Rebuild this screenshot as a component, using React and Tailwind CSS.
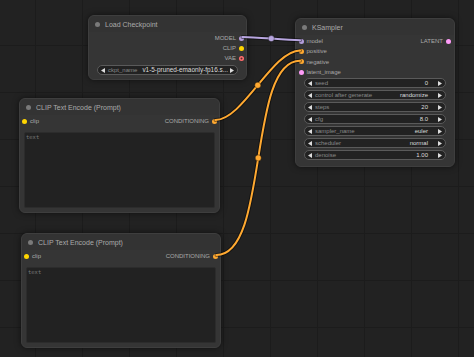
import React from 'react';

const FONT = { fontFamily: '"Liberation Sans", Arial, sans-serif' };

function Arrow({ dir }) {
  return (
    <svg width="4" height="5" viewBox="0 0 4 5" className="shrink-0">
      {dir === 'left' ? (
        <polygon points="4,0 4,5 0,2.5" fill="#ddd" />
      ) : (
        <polygon points="0,0 0,5 4,2.5" fill="#ddd" />
      )}
    </svg>
  );
}

function Widget({ label, value, wide }) {
  return (
    <div className="flex h-[10px] items-center rounded-full border border-[#5a5a5a] bg-[#222] px-[3px] leading-none">
      <Arrow dir="left" />
      <span className="ml-[3px] text-[6px] text-[#8a8a8a] whitespace-nowrap">{label}</span>
      <span
        className={
          wide
            ? 'ml-auto mr-[2px] pl-[4px] text-[6.4px] text-[#ddd] whitespace-nowrap'
            : 'ml-auto mr-[10px] text-[6px] text-[#ddd] whitespace-nowrap'
        }
      >
        {value}
      </span>
      <Arrow dir="right" />
    </div>
  );
}

function Dot({ color, hollow }) {
  return (
    <span
      className="block h-[5px] w-[5px] shrink-0 rounded-full"
      style={
        hollow
          ? { background: '#5a2a2a', boxShadow: `inset 0 0 0 1.5px ${color}` }
          : { background: color }
      }
    />
  );
}

function InputSlot({ label, color }) {
  return (
    <div className="flex h-[10.3px] items-center gap-[3px] pl-[2.5px]">
      <Dot color={color} />
      <span className="text-[6px] leading-none text-[#aaa]">{label}</span>
    </div>
  );
}

function OutputSlot({ label, color, hollow }) {
  return (
    <div className="flex h-[10px] items-center justify-end gap-[3px] pr-[2px]">
      <span className="text-[6px] leading-none text-[#aaa]">{label}</span>
      <Dot color={color} hollow={hollow} />
    </div>
  );
}

function Title({ text }) {
  return (
    <div className="flex h-[16px] items-center gap-[5px] rounded-t-[6px] bg-[#333] pl-[6px]">
      <span className="block h-[5px] w-[5px] rounded-full bg-[#7a7a7a]" />
      <span className="text-[7px] leading-none text-[#aaa]">{text}</span>
    </div>
  );
}

function ClipNode({ className }) {
  return (
    <div className={`absolute flex flex-col rounded-[6px] border border-[#3e3e3e] bg-[#353535] shadow-[0_0_6px_rgba(0,0,0,0.55)] ${className}`}>
      <Title text="CLIP Text Encode (Prompt)" />
      <div className="flex h-[10px] items-center justify-between pl-[2px] pr-[2px] mt-[1px]">
        <div className="flex items-center gap-[3px]">
          <Dot color="#ffd500" />
          <span className="text-[6px] leading-none text-[#aaa]">clip</span>
        </div>
        <div className="flex items-center gap-[3px]">
          <span className="text-[6px] leading-none text-[#aaa]">CONDITIONING</span>
          <Dot color="#ffa931" />
        </div>
      </div>
      <div
        className="mx-[4px] mt-[6px] mb-[4px] flex-1 rounded-[2px] border border-[#2c2c2c] bg-[#222] pl-[1px] pt-[2px] text-[5.5px] leading-none text-[#777]"
        style={{ fontFamily: '"DejaVu Sans Mono", monospace' }}
      >
        text
      </div>
    </div>
  );
}

export default function App() {
  return (
    <div
      className="relative h-[357px] w-[474px] overflow-hidden bg-[#222] bg-[linear-gradient(to_right,#1c1c1c_1px,transparent_1px),linear-gradient(to_bottom,#1c1c1c_1px,transparent_1px)] bg-[size:47px_47px] bg-[position:-12px_-2px]"
      style={FONT}
    >
      {/* Load Checkpoint */}
      <div className="absolute left-[88px] top-[15px] flex w-[159px] flex-col rounded-[6px] border border-[#3e3e3e] bg-[#353535] pb-[4px] shadow-[0_0_6px_rgba(0,0,0,0.55)]">
        <Title text="Load Checkpoint" />
        <div className="flex flex-col pt-[1px]">
          <OutputSlot label="MODEL" color="#b39ddb" />
          <OutputSlot label="CLIP" color="#ffd500" />
          <OutputSlot label="VAE" color="#ff6e6e" hollow />
        </div>
        <div className="mx-[8px] mt-[2px]">
          <Widget label="ckpt_name" value="v1-5-pruned-emaonly-fp16.s..." wide />
        </div>
      </div>

      {/* KSampler */}
      <div className="absolute left-[295px] top-[18px] flex w-[160px] flex-col rounded-[6px] border border-[#3e3e3e] bg-[#353535] pb-[6px] shadow-[0_0_6px_rgba(0,0,0,0.55)]">
        <Title text="KSampler" />
        <div className="relative flex flex-col pt-[1px]">
          <InputSlot label="model" color="#b39ddb" />
          <InputSlot label="positive" color="#ffa931" />
          <InputSlot label="negative" color="#ffa931" />
          <InputSlot label="latent_image" color="#ff9cf9" />
          <div className="absolute right-[3px] top-[1px] flex h-[10.3px] items-center gap-[3px]">
            <span className="text-[6px] leading-none text-[#aaa]">LATENT</span>
            <Dot color="#ff9cf9" />
          </div>
        </div>
        <div className="mx-[8px] mt-[1px] flex flex-col gap-[2px]">
          <Widget label="seed" value="0" />
          <Widget label="control after generate" value="randomize" />
          <Widget label="steps" value="20" />
          <Widget label="cfg" value="8.0" />
          <Widget label="sampler_name" value="euler" />
          <Widget label="scheduler" value="normal" />
          <Widget label="denoise" value="1.00" />
        </div>
      </div>

      <ClipNode className="left-[19px] top-[98px] h-[115px] w-[201px]" />
      <ClipNode className="left-[21px] top-[233px] h-[115px] w-[200px]" />

      {/* links */}
      <svg className="pointer-events-none absolute inset-0" width="474" height="357">
        <g fill="none" strokeLinecap="round">
          <path d="M242.5 37 C256.9 37 285.6 40.15 300 40.15" stroke="rgba(0,0,0,0.45)" strokeWidth="4" />
          <path d="M242.5 37 C256.9 37 285.6 40.15 300 40.15" stroke="#b8a6e0" strokeWidth="2" />
          <path d="M215.5 120 C242.9 120 272.6 50.45 300 50.45" stroke="rgba(0,0,0,0.45)" strokeWidth="4" />
          <path d="M215.5 120 C242.9 120 272.6 50.45 300 50.45" stroke="#ffa931" strokeWidth="2" />
          <path d="M216.5 255 C269.5 255 247 60.75 300 60.75" stroke="rgba(0,0,0,0.45)" strokeWidth="4" />
          <path d="M216.5 255 C269.5 255 247 60.75 300 60.75" stroke="#ffa931" strokeWidth="2" />
        </g>
        <circle cx="271.25" cy="38.6" r="3" fill="#b8a6e0" stroke="rgba(0,0,0,0.4)" strokeWidth="0.8" />
        <circle cx="257.75" cy="85.2" r="3" fill="#ffa931" stroke="rgba(0,0,0,0.4)" strokeWidth="0.8" />
        <circle cx="258.25" cy="157.9" r="3" fill="#ffa931" stroke="rgba(0,0,0,0.4)" strokeWidth="0.8" />
      </svg>
    </div>
  );
}
